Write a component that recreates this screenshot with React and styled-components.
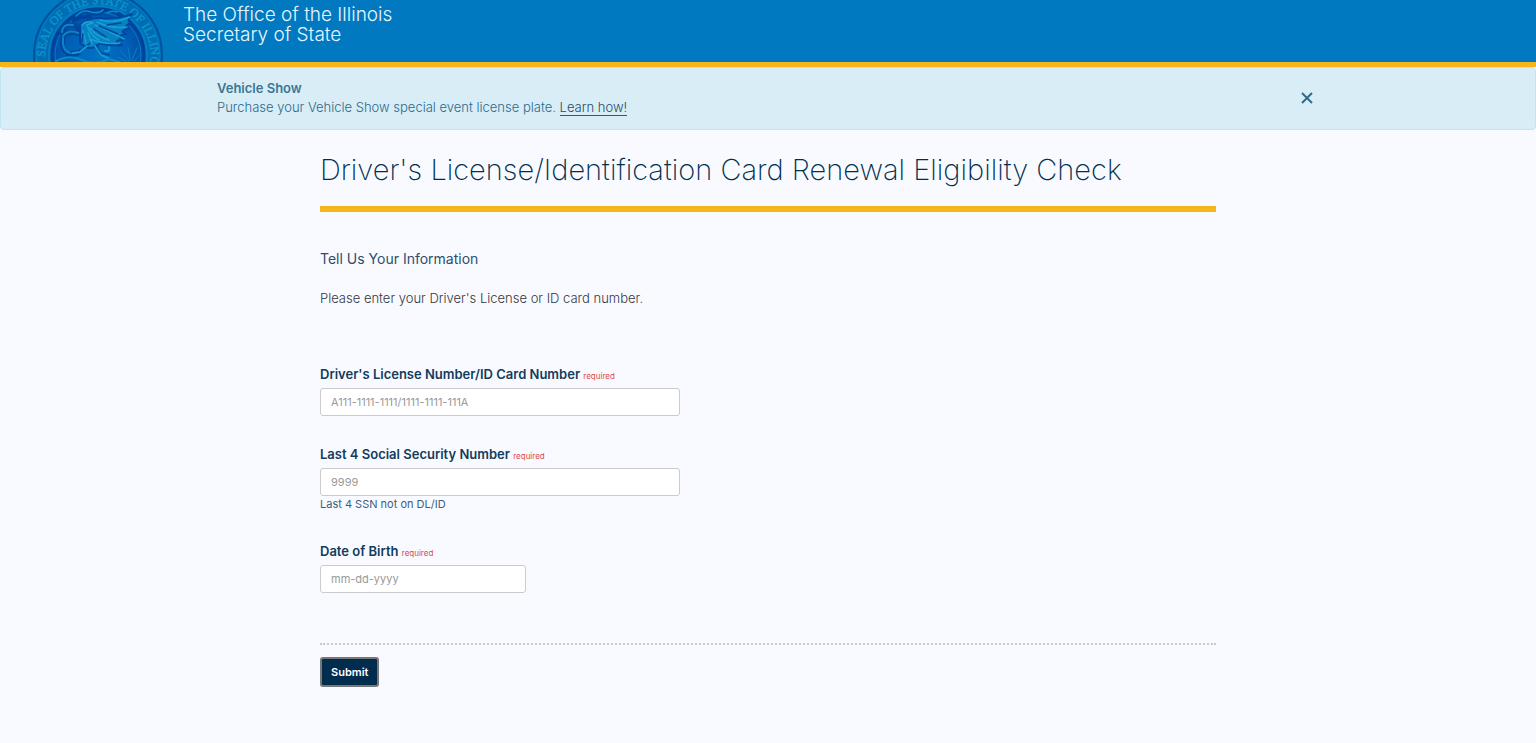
import React from 'react';
import styled, { createGlobalStyle } from 'styled-components';

const GlobalStyle = createGlobalStyle`
    body {
        margin: 0;
        background-color: #f9faff;
        color: #33383d;
        font-family: Inter, "Liberation Sans", sans-serif;
        font-size: 13px;
        line-height: 19px;
    }

    *, *::before, *::after {
        box-sizing: border-box;
    }
`

const Header = styled.header`
    display: flex;
    align-items: flex-start;
    gap: 19px;
    padding-left: 33px;
    background-color: #0079c1;
    border-bottom: 5px solid #f5b51b;
`

const SealImage = styled.svg`
    display: block;
    width: 131px;
    height: 62px;
`

const SiteName = styled.div`
    padding-top: 5px;
    color: #e6f5fd;
    font-size: 19px;
    font-weight: 300;
    line-height: 20px;
`

const Alert = styled.section`
    padding: 11px 0 12px;
    color: #2a6a8c;
    background-color: #d9edf6;
    border: 1px solid #bfe6f0;
    border-radius: 4px;
`

const AlertInner = styled.div`
    display: flex;
    align-items: center;
    justify-content: space-between;
    max-width: 1102px;
    margin: 0 auto;
`

const AlertText = styled.p`
    margin: 0;
    font-weight: 300;
`

const AlertTitle = styled.strong`
    color: #3a7797;
    font-weight: 600;
`

const AlertLink = styled.a`
    color: #1f4a6b;
    text-decoration: none;
    border-bottom: 1px solid #305a7a;
`

const CloseButton = styled.button`
    display: flex;
    padding: 6px;
    color: #2d6c8e;
    background: none;
    border: 0;
    cursor: pointer;
`

const Main = styled.main`
    max-width: 896px;
    margin: 0 auto;
    padding: 20px 0 56px;
`

const Title = styled.h1`
    margin: 0;
    padding-bottom: 16px;
    color: #003050;
    font-size: 29px;
    font-weight: 200;
    line-height: 40px;
    border-bottom: 6px solid #f5b51b;
`

const SubTitle = styled.h2`
    margin: 37px 0 20px;
    color: #2c4f6e;
    font-size: 14px;
    font-weight: 400;
    line-height: 20px;
`

const Intro = styled.p`
    margin: 0 0 57px;
    font-weight: 300;
`

const FieldGroup = styled.div`
    margin-bottom: 29px;
`

const Label = styled.label`
    display: block;
    margin-bottom: 2px;
    color: #123c5c;
    font-weight: 600;
`

const Required = styled.span`
    color: #e0474c;
    font-size: 8px;
    font-weight: 400;
`

const TextInput = styled.input`
    display: block;
    width: 100%;
    max-width: ${props => props.$short ? `206px` : `360px`};
    height: 28px;
    padding: 0 10px;
    color: #555;
    font-family: inherit;
    font-size: 11px;
    background-color: #fff;
    border: 1px solid #ccc;
    border-radius: 3px;

    &::placeholder{
        color: #999;
        opacity: 1;
    }
`

const HelpText = styled.div`
    color: #3b5f7c;
    font-size: 11px;
    line-height: 17px;
`

const Actions = styled.div`
    margin-top: 50px;
    padding-top: 12px;
    border-top: 2px dotted #c6c8ce;
`

const SubmitButton = styled.button`
    height: 30px;
    padding: 0 9px;
    color: #fff;
    font-family: inherit;
    font-size: 11px;
    font-weight: 600;
    background-color: #002c4e;
    border: 2px solid #777;
    border-radius: 3px;
    cursor: pointer;
`

const Seal = () => (
    <SealImage viewBox="0 0 131 62" role="img" aria-label="State seal">
        <defs>
            <radialGradient id="disc">
                <stop offset="0" stopColor="#0072c3" />
                <stop offset="0.7" stopColor="#005fb6" />
                <stop offset="1" stopColor="#004ca8" />
            </radialGradient>
            <path id="ring" d="M12 57 A53 53 0 0 1 118 57 L117 62" />
        </defs>
        <circle cx="65" cy="55" r="64" fill="#006cb6" stroke="#00549f" strokeWidth="2" />
        <circle cx="65" cy="55" r="62" fill="none" stroke="#0086c2" strokeWidth="1" />
        <circle cx="65" cy="55" r="49" fill="none" stroke="#0080c0" strokeWidth="2" />
        <circle cx="65" cy="55" r="46" fill="url(#disc)" stroke="#00429a" strokeWidth="3" />
        <circle cx="65" cy="55" r="43" fill="none" stroke="#007cc2" strokeWidth="1" />
        <text fill="#0c95c8" stroke="#0c95c8" strokeWidth="0.4" fontFamily="Liberation Serif, serif" fontSize="12">
            <textPath href="#ring">SEAL OF THE STATE OF ILLINOIS</textPath>
        </text>
        <g fill="none" strokeLinecap="round" strokeLinejoin="round">
            <path d="M43 17 Q50 10 58 13 Q66 15 70 11 M41 20 Q49 16 57 17" stroke="#00459d" strokeWidth="4" />
            <path d="M43 16 Q50 9 58 12 Q66 14 70 10 M74 13 Q78 10 84 12" stroke="#078fcd" strokeWidth="1.5" />
            <path d="M29 33 Q29 24 39 25 Q45 26 46 30 M30 36 Q36 30 46 34 M30 38 Q28 50 35 54 Q43 56 47 51" stroke="#00499f" strokeWidth="5" />
            <path d="M29 32 Q30 23 40 25 M30 36 Q36 29 45 33 M30 38 Q29 49 35 52 Q42 55 45 50" stroke="#0a87c5" strokeWidth="2" />
            <path d="M47 25 Q56 17 68 18 Q82 20 99 14 Q93 21 98 23 Q89 27 96 29 Q85 31 93 34 Q82 36 90 40 Q78 40 89 45 Q75 46 67 43 Q58 53 47 43 Z" fill="#0880c2" stroke="#00479f" strokeWidth="2" />
            <path d="M49 25 Q53 20 60 23 L54 25 Q57 35 66 40 M57 28 Q64 37 76 40 M62 25 Q76 31 91 39 M64 22 Q79 29 94 27 M67 20 Q80 24 97 17 M57 39 Q72 45 87 43 M50 31 L53 43 M55 33 L59 44" stroke="#16a2d3" strokeWidth="1.5" />
            <path d="M61 29 L73 37 M66 26 L85 34 M74 25 L88 23 M50 34 L49 42 M57 43 L48 50 L38 52 M63 45 L68 53 L76 55" stroke="#00479f" strokeWidth="1.5" />
            <path d="M54 46 L47 52 M62 46 L68 55 M47 52 L40 53 M68 55 L75 58 M72 51 Q78 52 76 47" stroke="#1297cf" strokeWidth="2" />
            <path d="M23 61 Q37 54 49 60 T76 59 L86 62" stroke="#078ac8" strokeWidth="2" />
            <path d="M96 61 L88 51 M97 60 L95 47 M99 60 L104 48 M101 61 L108 54 M93 61 L84 57" stroke="#0c7cc2" strokeWidth="1" />
        </g>
    </SealImage>
)

const Field = ({ id, label, placeholder, help, short }) => (
    <FieldGroup>
        <Label htmlFor={id}>{label} <Required>required</Required></Label>
        <TextInput id={id} type="text" placeholder={placeholder} $short={short} />
        {help && <HelpText>{help}</HelpText>}
    </FieldGroup>
)

const App = () => (
    <>
        <GlobalStyle />
        <Header>
            <Seal />
            <SiteName>The Office of the Illinois<br />Secretary of State</SiteName>
        </Header>
        <Alert>
            <AlertInner>
                <AlertText>
                    <AlertTitle>Vehicle Show</AlertTitle><br />
                    Purchase your Vehicle Show special event license plate. <AlertLink href="#learn">Learn how!</AlertLink>
                </AlertText>
                <CloseButton type="button" aria-label="Close">
                    <svg width="12" height="12" viewBox="0 0 12 12" stroke="currentColor" strokeWidth="2">
                        <path d="M1 1 L11 11 M11 1 L1 11" />
                    </svg>
                </CloseButton>
            </AlertInner>
        </Alert>
        <Main>
            <Title>Driver's License/Identification Card Renewal Eligibility Check</Title>
            <SubTitle>Tell Us Your Information</SubTitle>
            <Intro>Please enter your Driver's License or ID card number.</Intro>
            <form onSubmit={e => e.preventDefault()}>
                <Field id="license" label="Driver's License Number/ID Card Number" placeholder="A111-1111-1111/1111-1111-111A" />
                <Field id="ssn" label="Last 4 Social Security Number" placeholder="9999" help="Last 4 SSN not on DL/ID" />
                <Field id="dob" label="Date of Birth" placeholder="mm-dd-yyyy" short />
                <Actions>
                    <SubmitButton type="submit">Submit</SubmitButton>
                </Actions>
            </form>
        </Main>
    </>
);

export default App;
